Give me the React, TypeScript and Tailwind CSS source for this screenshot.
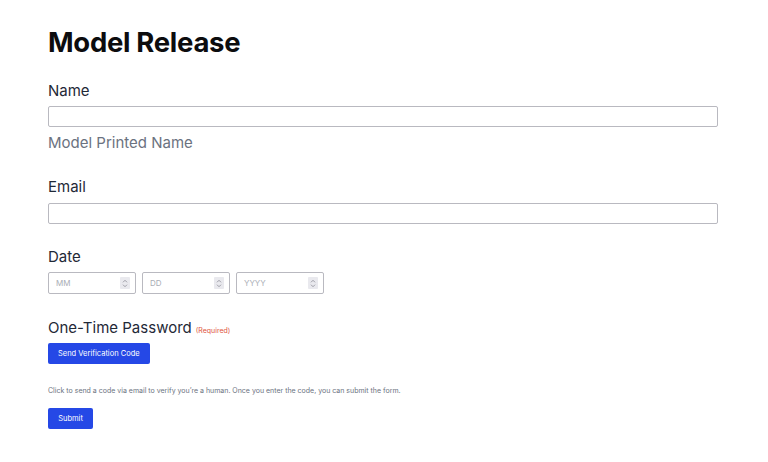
import React from "react";

const font = { fontFamily: "Inter, 'Open Sans', sans-serif" };

function Spinner() {
  return (
    <div className="w-[10px] h-[12px] bg-[#e9e9ee] rounded-[1px] flex items-center justify-center">
      <svg width="6" height="9" viewBox="0 0 6 9" fill="none" stroke="#8a8a94" strokeWidth="0.8">
        <path d="M1 3.3 L3 1.3 L5 3.3" />
        <path d="M1 5.7 L3 7.7 L5 5.7" />
      </svg>
    </div>
  );
}

function DateBox({ ph }: { ph: string }) {
  return (
    <div className="w-[88px] h-[22px] border border-[#b9b9c0] rounded-[2px] flex items-center justify-between pl-[7px] pr-[5px]">
      <span className="text-[8px] text-[#a9adb5]">{ph}</span>
      <Spinner />
    </div>
  );
}

export default function App() {
  return (
    <div className="bg-white w-[768px] h-[462px] pl-12 pr-[50px] pt-6" style={font}>
      <h1 className="text-[27.5px] leading-[36px] font-bold text-[#0c0c0e] tracking-[-0.3px]">Model Release</h1>

      <div className="mt-[19px] text-[15px] leading-6 text-[#1f2937]">Name</div>
      <div className="mt-[3px] h-[21px] border border-[#b9b9c0] rounded-[2px]" />
      <div className="mt-1 text-[15px] leading-6 text-[#6b7280]">Model Printed Name</div>

      <div className="mt-[20px] text-[15px] leading-6 text-[#1f2937]">Email</div>
      <div className="mt-[4px] h-[21px] border border-[#b9b9c0] rounded-[2px]" />

      <div className="mt-[21px] text-[15px] leading-6 text-[#1f2937]">Date</div>
      <div className="mt-[3px] flex gap-[6px]">
        <DateBox ph="MM" />
        <DateBox ph="DD" />
        <DateBox ph="YYYY" />
      </div>

      <div className="mt-[22px] flex items-baseline gap-[4px] leading-6">
        <span className="text-[15px] text-[#1f2937]">One-Time Password</span>
        <span className="text-[7px] text-[#e0533a]">(Required)</span>
      </div>
      <button className="mt-0 h-[21px] px-[10px] bg-[#2548e6] text-white text-[7.5px] rounded-[2px] block">
        Send Verification Code
      </button>

      <div className="mt-[22px] text-[7px] leading-[10px] text-[#6b7280]">
        Click to send a code via email to verify you’re a human. Once you enter the code, you can submit the form.
      </div>

      <button className="mt-[12px] h-[21px] w-[45px] bg-[#2548e6] text-white text-[7.5px] rounded-[2px] block">
        Submit
      </button>
    </div>
  );
}
